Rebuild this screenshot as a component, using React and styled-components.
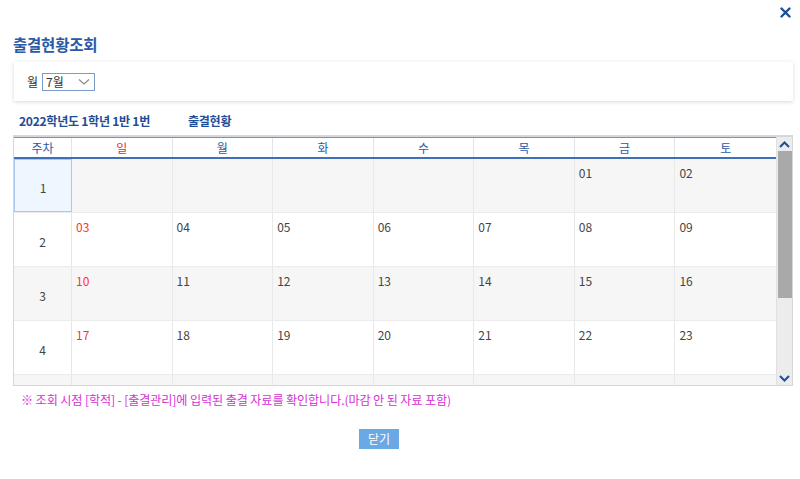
import React from "react";
import styled, { createGlobalStyle } from "styled-components";

const GlobalStyle = createGlobalStyle`
  body {
    margin: 0;
    background: #fff;
    font-family: "Noto Sans CJK KR", "Noto Sans", sans-serif;
  }
`;

// Data : week rows of July 2022 (5th row is only partly in view)
const weeks = [
  ["", "", "", "", "", "01", "02"],
  ["03", "04", "05", "06", "07", "08", "09"],
  ["10", "11", "12", "13", "14", "15", "16"],
  ["17", "18", "19", "20", "21", "22", "23"],
  ["", "", "", "", "", "", ""],
];
const days = ["일", "월", "화", "수", "목", "금", "토"];

const App = () => {
  return (
    <StyPage>
      <GlobalStyle />
      <StyTop>
        <CloseBtn>
          <svg width="11" height="11" viewBox="0 0 11 11">
            <path d="M1.5 1.5 L9.5 9.5 M9.5 1.5 L1.5 9.5" stroke="#1d4e9c" strokeWidth="2.4" strokeLinecap="round" />
          </svg>
        </CloseBtn>
      </StyTop>
      <Title>출결현황조회</Title>
      <FilterBox>
        <FilterLabel>월</FilterLabel>
        <SelectBox>
          <span>7월</span>
          <svg width="12" height="8" viewBox="0 0 12 8">
            <path d="M1 1.5 L6 6 L11 1.5" fill="none" stroke="#8a8a8a" strokeWidth="1.2" />
          </svg>
        </SelectBox>
      </FilterBox>
      <InfoRow>
        <span>2022학년도 1학년 1반 1번</span>
        <span>출결현황</span>
      </InfoRow>
      <GridWrap>
        <GridMain>
          <HeadRow>
            <HeadCell>주차</HeadCell>
            {days.map((d, i) => (
              <HeadCell key={d} red={i === 0}>
                {d}
              </HeadCell>
            ))}
          </HeadRow>
          <Body>
            {weeks.map((w, ri) => (
              <Row key={ri} alt={ri % 2 === 0}>
                <WeekCell selected={ri === 0}>{ri < 4 ? ri + 1 : ""}</WeekCell>
                {w.map((d, ci) => (
                  <DayCell key={ci} red={ci === 0}>
                    {d}
                  </DayCell>
                ))}
              </Row>
            ))}
          </Body>
        </GridMain>
        <ScrollBar>
          <ScrollArrow>
            <svg width="11" height="7" viewBox="0 0 11 7">
              <path d="M1 6 L5.5 1.5 L10 6" fill="none" stroke="#1d4e9c" strokeWidth="2" />
            </svg>
          </ScrollArrow>
          <Track>
            <Thumb />
          </Track>
          <ScrollArrow>
            <svg width="11" height="7" viewBox="0 0 11 7">
              <path d="M1 1 L5.5 5.5 L10 1" fill="none" stroke="#1d4e9c" strokeWidth="2" />
            </svg>
          </ScrollArrow>
        </ScrollBar>
      </GridWrap>
      <Note>※ 조회 시점 [학적] - [출결관리]에 입력된 출결 자료를 확인합니다.(마감 안 된 자료 포함)</Note>
      <BtnRow>
        <CloseButton>닫기</CloseButton>
      </BtnRow>
    </StyPage>
  );
};

export default App;

const StyPage = styled.div`
  width: 800px;
  height: 479px;
  box-sizing: border-box;
  padding: 0 7px 0 13px;
  display: flex;
  flex-direction: column;
`;

const StyTop = styled.div`
  display: flex;
  justify-content: flex-end;
  height: 24px;
  padding-top: 7px;
  box-sizing: border-box;
`;

const CloseBtn = styled.div`
  width: 11px;
  height: 11px;
  margin-right: 2px;
  display: flex;
`;

const Title = styled.div`
  margin-top: 9px;
  height: 22px;
  line-height: 22px;
  font-size: 15.5px;
  font-weight: 700;
  color: #2a5aa6;
  letter-spacing: -0.2px;
`;

const FilterBox = styled.div`
  margin-top: 7px;
  margin-left: 1px;
  height: 39px;
  display: flex;
  align-items: center;
  padding-left: 13px;
  background: #fff;
  box-shadow: 0 1px 4px rgba(0, 0, 0, 0.16);
`;

const FilterLabel = styled.span`
  font-size: 12px;
  color: #333;
  margin-right: 4px;
`;

const SelectBox = styled.div`
  width: 53px;
  height: 18px;
  box-sizing: border-box;
  border: 1px solid #7b9bc8;
  display: flex;
  align-items: center;
  justify-content: space-between;
  padding: 0 4px 0 3px;
  font-size: 12px;
  color: #333;
`;

const InfoRow = styled.div`
  margin-top: 10px;
  height: 19px;
  display: flex;
  align-items: center;
  gap: 38px;
  padding-left: 6px;
  font-size: 12.1px;
  font-weight: 700;
  color: #1f4e98;
  letter-spacing: -0.3px;
`;

const GridWrap = styled.div`
  margin-top: 5px;
  width: 780px;
  height: 251px;
  box-sizing: border-box;
  border: 1px solid #d6d6d6;
  border-top: 2px solid #d4d8de;
  display: flex;
  overflow: hidden;
`;

const GridMain = styled.div`
  flex: 1;
  display: flex;
  flex-direction: column;
  overflow: hidden;
`;

const HeadRow = styled.div`
  display: grid;
  grid-template-columns: 58px repeat(7, 1fr);
  height: 22px;
  flex-shrink: 0;
  border-top: 1px solid #6f92c8;
  border-bottom: 2px solid #3f6fb8;
  box-sizing: border-box;
`;

const HeadCell = styled.div`
  display: flex;
  align-items: center;
  justify-content: center;
  font-size: 12px;
  color: ${(p) => (p.red ? "#ff2020" : "#2a5aa6")};
  border-right: 1px solid #dfe3ea;
  &:last-child {
    border-right: none;
  }
`;

const Body = styled.div`
  display: flex;
  flex-direction: column;
`;

const Row = styled.div`
  display: grid;
  grid-template-columns: 58px repeat(7, 1fr);
  height: 54px;
  box-sizing: border-box;
  flex-shrink: 0;
  background: ${(p) => (p.alt ? "#f6f6f6" : "#fff")};
  border-bottom: 1px solid #ebebeb;
`;

const WeekCell = styled.div`
  display: flex;
  align-items: center;
  justify-content: center;
  padding-top: 4px;
  font-size: 12px;
  color: #444;
  border-right: 1px solid #e6e6e6;
  box-sizing: border-box;
  ${(p) =>
    p.selected &&
    `
    background: #eef6ff;
    border: 1px solid #a9c8ec;
  `}
`;

const DayCell = styled.div`
  padding: 5px 0 0 4px;
  font-size: 12px;
  color: ${(p) => (p.red ? "#ff3030" : "#444")};
  border-right: 1px solid #e9e9e9;
  &:last-child {
    border-right: none;
  }
`;

const ScrollBar = styled.div`
  width: 15px;
  display: flex;
  flex-direction: column;
  background: #ececec;
  border-left: 1px solid #e0e0e0;
`;

const ScrollArrow = styled.div`
  height: 14px;
  display: flex;
  align-items: center;
  justify-content: center;
  flex-shrink: 0;
`;

const Track = styled.div`
  flex: 1;
  padding: 0 0 0 1px;
`;

const Thumb = styled.div`
  width: 14px;
  height: 147px;
  background: #a9a9a9;
`;

const Note = styled.div`
  margin-top: 5px;
  padding-left: 8px;
  font-size: 12.1px;
  color: #d62fd6;
  letter-spacing: -0.1px;
`;

const BtnRow = styled.div`
  margin-top: 21px;
  display: flex;
  padding-left: 346px;
`;

const CloseButton = styled.div`
  width: 40px;
  height: 20px;
  line-height: 20px;
  text-align: center;
  background: #6aa8e6;
  color: #fff;
  font-size: 12px;
`;
